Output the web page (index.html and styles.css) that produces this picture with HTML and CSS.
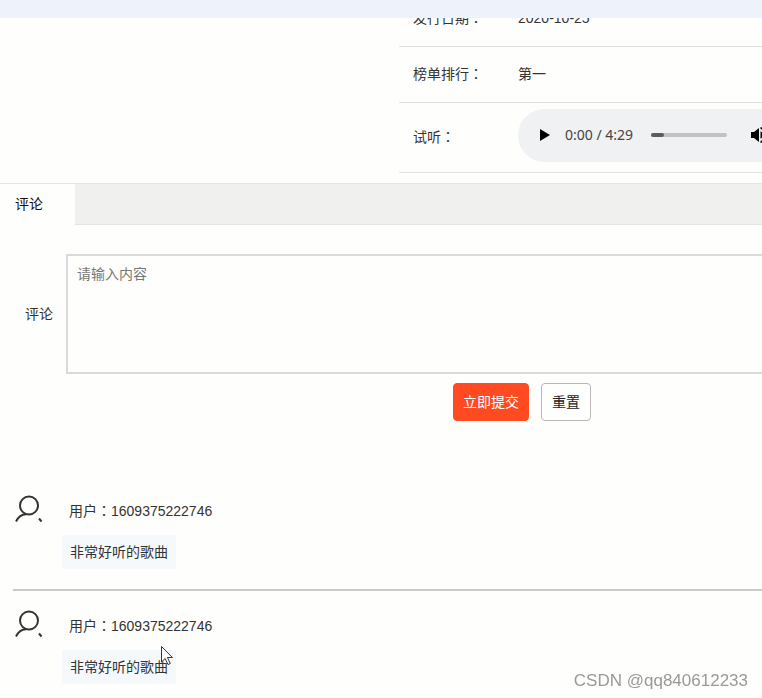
FILE: index.html
```
<!DOCTYPE html>
<html lang="zh-CN">
<head>
<meta charset="utf-8">
<meta name="viewport" content="width=device-width, initial-scale=1">
<title>评论</title>
<link rel="stylesheet" href="styles.css">
</head>
<body>
<header class="topbar"></header>
<main>
  <section class="details">
    <table class="info">
      <tbody>
        <tr><th scope="row">发行日期<span class="colon" lang="zh-TW">：</span></th><td>2020-10-25</td></tr>
        <tr><th scope="row">榜单排行<span class="colon" lang="zh-TW">：</span></th><td>第一</td></tr>
        <tr class="listen">
          <th scope="row">试听<span class="colon" lang="zh-TW">：</span></th>
          <td>
            <div class="player">
              <button class="icon-button" type="button" aria-label="播放">
                <svg width="10" height="12" viewBox="0 0 10 12"><path d="M0 0 10 6 0 12Z"/></svg>
              </button>
              <span class="time">0:00 / 4:29</span>
              <span class="track"><span class="buffered"></span></span>
              <button class="icon-button" type="button" aria-label="音量">
                <svg width="18" height="18" viewBox="0 0 18 18"><path d="M0 6v6h3l5 4V2L3 6Z"/><path d="M9.500 5.200v7.600c1.300-.7 2.200-2.100 2.200-3.800S10.800 5.900 9.500 5.200ZM9.500 1v2c2.900.9 5 3.200 5 6s-2.100 5.100-5 6v2c4-.9 7-4 7-8s-3-7.100-7-8Z"/></svg>
              </button>
            </div>
          </td>
        </tr>
      </tbody>
    </table>
  </section>

  <nav class="tabs"><button class="tab" type="button">评论</button></nav>

  <form class="comment-form">
    <div class="field">
      <label for="content">评论</label>
      <textarea id="content" placeholder="请输入内容"></textarea>
    </div>
    <div class="actions">
      <button class="button primary" type="button">立即提交</button>
      <button class="button" type="reset">重置</button>
    </div>
  </form>

  <section class="comments">
    <article class="comment">
      <svg class="avatar" viewBox="0 0 28 28"><circle cx="14" cy="10.500" r="9"/><path d="M1 26.500C3 22.500 6.500 19.500 11 19.300M24 23.500l2.500 3"/></svg>
      <div class="body">
        <p class="user">用户<span class="colon" lang="zh-TW">：</span>1609375222746</p>
        <p class="message">非常好听的歌曲</p>
      </div>
    </article>
    <article class="comment">
      <svg class="avatar" viewBox="0 0 28 28"><circle cx="14" cy="10.500" r="9"/><path d="M1 26.500C3 22.500 6.500 19.500 11 19.300M24 23.500l2.500 3"/></svg>
      <div class="body">
        <p class="user">用户<span class="colon" lang="zh-TW">：</span>1609375222746</p>
        <p class="message">非常好听的歌曲
          <svg class="pointer" width="12" height="20" viewBox="0 0 12 20"><path d="M.5.5v15.500l3.600-3.500 2.900 6 2.300-1-2.900-6h5Z"/></svg>
        </p>
      </div>
    </article>
  </section>
</main>
<div class="watermark">CSDN @qq840612233</div>
</body>
</html>
```
FILE: styles.css
```
* { box-sizing: border-box; }

body {
  margin: 0;
  background: #fefefd;
  color: #333;
  font: 14px/24px "Liberation Sans", "Noto Sans CJK SC", sans-serif;
  overflow: hidden;
}

button, textarea { font: inherit; }

.colon { font-family: "Noto Sans CJK TC", sans-serif; line-height: 1; }

.topbar {
  position: relative;
  z-index: 1;
  height: 18px;
  background: #edf2fb;
}

.details {
  margin-top: -28px;
  padding: 0 0 9px 399px;
  overflow: hidden;
}

.info {
  width: 100%;
  border-collapse: collapse;
  table-layout: fixed;
}

.info tr {
  height: 56px;
  border-bottom: 1px solid #e2e2e2;
}

.info .listen { height: 70px; }

.info th, .info td {
  padding: 0;
  font-weight: 400;
  text-align: left;
}

.info th {
  width: 119px;
  padding-left: 14px;
}

.info .listen td {
  padding-top: 6px;
  vertical-align: top;
}

.player {
  display: flex;
  align-items: center;
  width: 300px;
  height: 53px;
  padding-left: 22px;
  border-radius: 27px;
  background: #eff1f2;
}

.icon-button {
  display: flex;
  padding: 0;
  border: 0;
  background: none;
}

.time {
  width: 70px;
  margin: 0 16px 0 15px;
  color: #444;
  font-family: "Noto Sans", sans-serif;
  white-space: nowrap;
}

.track {
  width: 76px;
  height: 4px;
  margin-right: 24px;
  border-radius: 2px;
  background: #c1c2c3;
}

.buffered {
  display: block;
  width: 13px;
  height: 4px;
  border-radius: 2px;
  background: #5b5c5d;
}

.tabs {
  display: flex;
  height: 42px;
  margin-top: 1px;
  border: solid #e4e4e4;
  border-width: 1px 0;
  background: #f0f0ef;
}

.tab {
  width: 75px;
  height: 41px;
  padding: 0 17px 0 0;
  border: 0;
  background: #fefefd;
  color: #111;
}

.comment-form { padding-top: 29px; }

.field {
  display: flex;
  align-items: center;
  margin-right: -10px;
}

.field label {
  width: 66px;
  padding-left: 25px;
}

.field textarea {
  flex: 1;
  height: 120px;
  padding: 6px 9px;
  border: 2px solid #dadada;
  background: #fefefd;
  resize: none;
}

.field textarea::placeholder { color: #777; }

.actions {
  display: flex;
  gap: 12px;
  padding: 9px 0 0 453px;
}

.button {
  height: 38px;
  padding: 0 10px;
  border: 1px solid #b8b8b8;
  border-radius: 4px;
  background: #fefefd;
  color: #222;
}

.primary {
  padding: 0 9px;
  border-color: #ff4a22;
  background: #ff4a22;
  color: #fff;
}

.comments { padding: 55px 0 0 13px; }

.comment {
  display: flex;
  height: 115px;
  padding: 19px 0 0 2px;
  border-bottom: 2px solid #c9c9c9;
}

.comment:last-child { border-bottom: 0; }

.avatar {
  width: 28px;
  height: 28px;
  fill: none;
  stroke: #333;
  stroke-width: 2;
}

.body { padding: 4px 0 0 19px; }

.user {
  margin: 0 0 12px;
  padding-left: 7px;
}

.message {
  position: relative;
  width: max-content;
  margin: 0;
  padding: 5px 8px;
  background: #f6f9fc;
}

.pointer {
  position: absolute;
  top: -4px;
  right: 3px;
  fill: #fff;
  stroke: #333;
}

.watermark {
  position: fixed;
  right: 14px;
  bottom: 5px;
  color: #999;
  font-size: 17px;
}
```
